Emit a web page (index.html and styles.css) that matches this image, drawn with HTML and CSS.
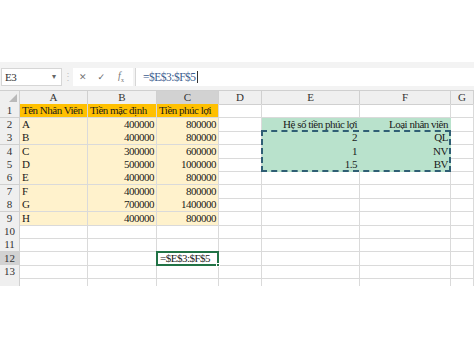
FILE: index.html
```html
<!DOCTYPE html>
<html lang="vi">
<head>
    <meta charset="UTF-8">
    <title>Excel - Tiền phúc lợi</title>
    <link rel="stylesheet" href="styles.css">
</head>
<body>
    <div class="top-gap"></div>

    <!-- thanh công thức -->
    <div class="formula-bar">
        <div class="name-box">
            <span>E3</span>
            <span class="drop">&#9662;</span>
        </div>
        <div class="grip">&#8942;</div>
        <div class="fx-buttons">
            <span>&#10005;</span>
            <span class="ok">&#10003;</span>
            <span class="fx"><i>f</i><sub>x</sub></span>
        </div>
        <div class="formula-input">=$E$3:$F$5<span class="caret"></span></div>
    </div>

    <!-- bảng tính -->
    <div class="sheet">
        <div class="row head">
            <div class="cell corner"><span class="tri"></span></div>
            <div class="cell">A</div><div class="cell">B</div><div class="cell sel">C</div>
            <div class="cell">D</div><div class="cell">E</div><div class="cell">F</div><div class="cell">G</div>
        </div>
        <div class="row">
            <div class="cell num">1</div>
            <div class="cell orange">Tên Nhân Viên</div><div class="cell orange">Tiền mặc định</div><div class="cell orange">Tiền phúc lợi</div>
            <div class="cell"></div><div class="cell"></div><div class="cell"></div><div class="cell"></div>
        </div>
        <div class="row">
            <div class="cell num">2</div>
            <div class="cell yellow">A</div><div class="cell yellow r">400000</div><div class="cell yellow r">800000</div>
            <div class="cell"></div><div class="cell green r">Hệ số tiền phúc lợi</div><div class="cell green r">Loại nhân viên</div><div class="cell"></div>
        </div>
        <div class="row">
            <div class="cell num">3</div>
            <div class="cell yellow">B</div><div class="cell yellow r">400000</div><div class="cell yellow r">800000</div>
            <div class="cell"></div>
            <div class="cell green r">
                <span class="copy-box"></span>2
            </div>
            <div class="cell green r">QL</div><div class="cell"></div>
        </div>
        <div class="row">
            <div class="cell num">4</div>
            <div class="cell yellow">C</div><div class="cell yellow r">300000</div><div class="cell yellow r">600000</div>
            <div class="cell"></div><div class="cell green r">1</div><div class="cell green r">NV</div><div class="cell"></div>
        </div>
        <div class="row">
            <div class="cell num">5</div>
            <div class="cell yellow">D</div><div class="cell yellow r">500000</div><div class="cell yellow r">1000000</div>
            <div class="cell"></div><div class="cell green r">1.5</div><div class="cell green r">BV</div><div class="cell"></div>
        </div>
        <div class="row">
            <div class="cell num">6</div>
            <div class="cell yellow">E</div><div class="cell yellow r">400000</div><div class="cell yellow r">800000</div>
            <div class="cell"></div><div class="cell"></div><div class="cell"></div><div class="cell"></div>
        </div>
        <div class="row">
            <div class="cell num">7</div>
            <div class="cell yellow">F</div><div class="cell yellow r">400000</div><div class="cell yellow r">800000</div>
            <div class="cell"></div><div class="cell"></div><div class="cell"></div><div class="cell"></div>
        </div>
        <div class="row">
            <div class="cell num">8</div>
            <div class="cell yellow">G</div><div class="cell yellow r">700000</div><div class="cell yellow r">1400000</div>
            <div class="cell"></div><div class="cell"></div><div class="cell"></div><div class="cell"></div>
        </div>
        <div class="row">
            <div class="cell num">9</div>
            <div class="cell yellow">H</div><div class="cell yellow r">400000</div><div class="cell yellow r">800000</div>
            <div class="cell"></div><div class="cell"></div><div class="cell"></div><div class="cell"></div>
        </div>
        <div class="row">
            <div class="cell num">10</div>
            <div class="cell"></div><div class="cell"></div><div class="cell"></div>
            <div class="cell"></div><div class="cell"></div><div class="cell"></div><div class="cell"></div>
        </div>
        <div class="row">
            <div class="cell num">11</div>
            <div class="cell"></div><div class="cell"></div><div class="cell"></div>
            <div class="cell"></div><div class="cell"></div><div class="cell"></div><div class="cell"></div>
        </div>
        <div class="row">
            <div class="cell num sel">12</div>
            <div class="cell"></div><div class="cell"></div><div class="cell active">=$E$3:$F$5<span class="handle"></span></div>
            <div class="cell"></div><div class="cell"></div><div class="cell"></div><div class="cell"></div>
        </div>
        <div class="row">
            <div class="cell num">13</div>
            <div class="cell"></div><div class="cell"></div><div class="cell"></div>
            <div class="cell"></div><div class="cell"></div><div class="cell"></div><div class="cell"></div>
        </div>
        <div class="row last">
            <div class="cell num"></div>
            <div class="cell"></div><div class="cell"></div><div class="cell"></div>
            <div class="cell"></div><div class="cell"></div><div class="cell"></div><div class="cell"></div>
        </div>
    </div>
</body>
</html>
```

FILE: styles.css
```css
* {
    margin: 0;
    padding: 0;
    box-sizing: border-box;
}

body {
    width: 474px;
    height: 348px;
    overflow: hidden;
    background: #ffffff;
    color: #1a1a1a;
    font-family: 'Liberation Serif', 'Times New Roman', serif;
    font-size: 11px;
    letter-spacing: -0.5px;
}

.top-gap {
    height: 62px;
}

/* thanh công thức */
.formula-bar {
    height: 28px;
    background: #f3f3f3;
    display: flex;
    align-items: center;
    padding-top: 1px;
}

.name-box {
    width: 61px;
    height: 18px;
    margin-left: 1px;
    background: #fff;
    border: 1px solid #d6d6d6;
    display: flex;
    justify-content: space-between;
    align-items: center;
    padding: 0 6px 0 3px;
    font-size: 11px;
    color: #333;
}

.drop {
    font-size: 8px;
    color: #666;
}

.grip {
    width: 11px;
    text-align: center;
    color: #c4c4c4;
    font-size: 10px;
}

.fx-buttons {
    width: 60px;
    height: 18px;
    background: #fff;
    display: flex;
    align-items: center;
    gap: 11px;
    padding-left: 6px;
    font-family: 'DejaVu Sans', sans-serif;
    font-size: 9px;
    letter-spacing: 0;
    color: #777;
}

.fx-buttons .ok {
    color: #666;
}

.fx {
    font-family: 'Liberation Serif', serif;
    font-size: 10px;
    margin-left: 2px;
}

.fx sub {
    font-size: 6px;
}

.formula-input {
    flex: 1;
    height: 18px;
    margin-left: 2px;
    background: #fff;
    border-left: 1px solid #d6d6d6;
    padding-left: 7px;
    display: flex;
    align-items: center;
    font-size: 11.5px;
    color: #3c5d8f;
}

.caret {
    width: 1px;
    height: 12px;
    margin-left: 1px;
    background: #333;
}

/* bảng tính */
.sheet {
    border-top: 1px solid #cfcfcf;
    height: 196px;
    overflow: hidden;
}

.row {
    display: grid;
    grid-template-columns: 20px 68px 69px 62px 43px 98px 91px 1fr;
    height: 13.4px;
}

.row.last {
    height: 9px;
}

.cell {
    position: relative;
    border-right: 1px solid #dadada;
    border-bottom: 1px solid #dadada;
    padding: 0 2px;
    line-height: 13px;
    white-space: nowrap;
}

.head .cell {
    background: #efefef;
    border-color: #d0d0d0;
    text-align: center;
    color: #333;
    letter-spacing: 0;
}

.head .cell.sel {
    background: #d2d2d2;
    border-bottom: 1px solid #9a9a9a;
}

.corner .tri {
    position: absolute;
    right: 2px;
    bottom: 2px;
    border-left: 8px solid transparent;
    border-bottom: 8px solid #b9b9b9;
}

.num {
    background: #efefef;
    border-color: #d0d0d0;
    text-align: center;
    color: #333;
    letter-spacing: 0;
}

.num.sel {
    background: #d2d2d2;
}

.r {
    text-align: right;
}

.orange {
    background: #ffc000;
}

.yellow {
    background: #fff2cc;
}

.green {
    background: #b9e2cc;
    border-right-color: #b9e2cc;
    border-bottom-color: #b9e2cc;
}

/* vùng được sao chép E3:F5 */
.copy-box {
    position: absolute;
    left: -1px;
    top: -1px;
    width: 190px;
    height: 41.6px;
    border: 2px dashed #2f5e74;
    z-index: 2;
}

.active {
    border: 2px solid #217346;
    margin: -1px 0 0 -1px;
    padding-left: 2px;
    line-height: 11px;
    color: #222;
    z-index: 3;
}

.handle {
    position: absolute;
    right: -3px;
    bottom: -3px;
    width: 4px;
    height: 4px;
    background: #217346;
    border: 1px solid #fff;
}
```
